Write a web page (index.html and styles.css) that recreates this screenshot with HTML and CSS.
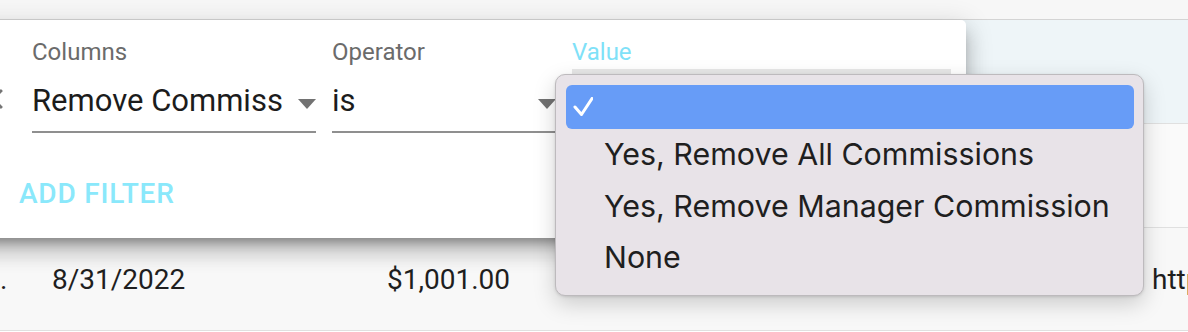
FILE: index.html
```html
<!DOCTYPE html>
<html lang="en">
<head>
<meta charset="utf-8">
<title>Filter panel</title>
<link rel="stylesheet" href="styles.css">
</head>
<body>
<div class="grid">
  <div class="grid-header"></div>
  <div class="row row-selected"></div>
  <div class="row"></div>
  <div class="row row-data">
    <div class="cell">.</div>
    <div class="cell">8/31/2022</div>
    <div class="cell cell-right">$1,001.00</div>
    <div class="cell"></div>
    <div class="cell">https://example.com</div>
  </div>
</div>

<div class="filter-panel">
  <div class="filter-row">
    <div class="close-btn">
      <svg class="close-icon" viewBox="0 0 24 24"><path d="M19 6.41L17.59 5 12 10.59 6.41 5 5 6.41 10.59 12 5 17.59 6.41 19 12 13.41 17.59 19 19 17.59 13.41 12z"/></svg>
    </div>
    <div class="field field-columns">
      <div class="field-label">Columns</div>
      <div class="field-input">
        <span class="field-value">Remove Commissions</span>
        <span class="arrow"></span>
      </div>
    </div>
    <div class="field field-operator">
      <div class="field-label">Operator</div>
      <div class="field-input">
        <span class="field-value">is</span>
        <span class="arrow"></span>
      </div>
    </div>
    <div class="field field-value-col">
      <div class="field-label label-focused">Value</div>
      <div class="native-select"></div>
    </div>
  </div>
  <div class="panel-actions">
    <span class="add-filter">Add filter</span>
  </div>
</div>

<div class="select-menu">
  <div class="menu-item menu-item-selected">
    <svg class="check" viewBox="0 0 20 20"><polyline points="2,10 8.5,17.5 19,1.5"/></svg>
  </div>
  <div class="menu-item">Yes, Remove All Commissions</div>
  <div class="menu-item">Yes, Remove Manager Commission</div>
  <div class="menu-item">None</div>
</div>
</body>
</html>
```

FILE: styles.css
```css
html, body {
  margin: 0;
  padding: 0;
}
body {
  width: 1188px;
  height: 332px;
  overflow: hidden;
  position: relative;
  background: #ffffff;
  font-family: Roboto, "Liberation Sans", sans-serif;
  color: #222222;
}

/* ---------- grid behind ---------- */
.grid {
  display: flex;
  flex-direction: column;
}
.grid-header {
  height: 19px;
  background: #f7f7f7;
  border-bottom: 1px solid #d4d4d4;
}
.row {
  height: 103px;
  background: #fafafa;
  border-bottom: 1px solid #e0e0e0;
}
.row-selected {
  background: #eef5f8;
}
.row-data {
  height: 102px;
  display: grid;
  grid-template-columns: 52px 334px 124px 642px 1fr;
  align-items: center;
  font-size: 28px;
  color: #1f1f1f;
  white-space: nowrap;
  background: #f8f8f8;
}
.cell {
  overflow: hidden;
}
.cell-right {
  text-align: right;
}

/* ---------- filter panel ---------- */
.filter-panel {
  position: absolute;
  left: -40px;
  top: 20px;
  width: 1006px;
  height: 218px;
  background: #ffffff;
  border-radius: 0 5px 5px 0;
  box-shadow: 0 9px 10px -5px rgba(0,0,0,0.32), 0 15px 19px 2px rgba(0,0,0,0.14), 0 6px 26px 4px rgba(0,0,0,0.12);
  display: flex;
  flex-direction: column;
}
.filter-row {
  display: flex;
  align-items: flex-end;
  padding-top: 18px;
}
.close-btn {
  width: 66px;
  height: 38px;
  margin-right: 6px;
  margin-bottom: 15px;
  display: flex;
  justify-content: center;
  align-items: center;
}
.close-icon {
  width: 34px;
  height: 34px;
  fill: #757575;
}
.field {
  display: flex;
  flex-direction: column;
}
.field-columns {
  width: 284px;
  margin-right: 16px;
}
.field-operator {
  width: 224px;
  margin-right: 16px;
}
.field-value-col {
  width: 379px;
  align-self: stretch;
}
.field-label {
  font-size: 24px;
  line-height: 28px;
  color: #6b6b6b;
  height: 28px;
}
.label-focused {
  color: #7fe1f8;
}
.field-input {
  margin-top: 17px;
  height: 36px;
  padding-bottom: 12px;
  border-bottom: 2px solid #8f8f8f;
  display: flex;
  align-items: center;
  position: relative;
}
.field-value {
  font-size: 31px;
  line-height: 36px;
  color: #1c1c1c;
  white-space: nowrap;
  overflow: hidden;
  flex: 1;
  margin-right: 32px;
  text-overflow: clip;
}
.arrow {
  position: absolute;
  right: 0;
  top: 16px;
  width: 0;
  height: 0;
  border-left: 9px solid transparent;
  border-right: 9px solid transparent;
  border-top: 10px solid #727272;
}
.native-select {
  margin-top: 3px;
  height: 40px;
  background: #e7e7e7;
}
.panel-actions {
  padding: 45px 0 0 59px;
}
.add-filter {
  font-size: 28px;
  line-height: 32px;
  font-weight: 500;
  letter-spacing: 0.8px;
  text-transform: uppercase;
  color: #8ae8fb;
}

/* ---------- native select popup ---------- */
.select-menu {
  position: absolute;
  left: 555px;
  top: 74px;
  width: 568px;
  height: 200px;
  padding: 10px 9px 10px 10px;
  background: #e8e3e8;
  border: 1px solid #bdbabd;
  border-radius: 10px;
  box-shadow: 0 8px 22px rgba(0,0,0,0.18), 0 1px 3px rgba(0,0,0,0.12);
  font-family: Inter, "Noto Sans", sans-serif;
  display: flex;
  flex-direction: column;
}
.menu-item {
  height: 51.5px;
  line-height: 51.5px;
  padding-left: 38px;
  font-size: 30.4px;
  color: #1f1f1f;
  white-space: nowrap;
}
.menu-item-selected {
  height: 44px;
  background: #679cf7;
  border-radius: 6px;
  padding-left: 7px;
  display: flex;
  align-items: center;
}
.check {
  width: 20px;
  height: 20px;
  fill: none;
  stroke: #ffffff;
  stroke-width: 3;
  stroke-linecap: round;
  stroke-linejoin: round;
}
```
